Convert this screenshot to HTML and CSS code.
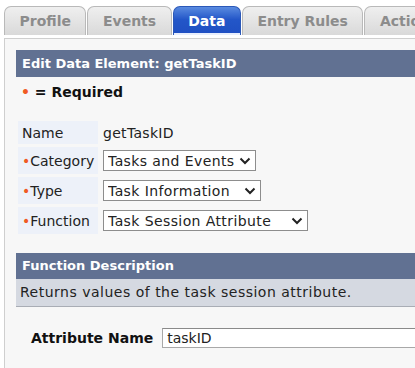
FILE: index.html
```html
<!DOCTYPE html>
<html lang="en">

<head>
    <meta charset="UTF-8">
    <meta name="viewport" content="width=device-width, initial-scale=1.0">
    <title>Edit Data Element</title>
    <link rel="stylesheet" href="styles.css">
</head>

<body>
    <div class="page">
        <ul class="tabs">
            <li class="tab">Profile</li>
            <li class="tab">Events</li>
            <li class="tab active">Data</li>
            <li class="tab">Entry Rules</li>
            <li class="tab">Actions</li>
        </ul>

        <div class="panel">
            <div class="section-head">Edit Data Element: getTaskID</div>
            <div class="required"><span class="dot">&bull;</span> = Required</div>

            <div class="fields">
                <div class="label">Name</div>
                <div class="value">getTaskID</div>

                <div class="label"><span class="dot">&bull;</span>Category</div>
                <div class="value">
                    <span class="select select-category">
                        <select>
                            <option>Tasks and Events</option>
                        </select>
                        <svg class="chevron" width="12" height="8" viewBox="0 0 12 8"><path d="M1.5 1.5 L6 6 L10.5 1.5" fill="none" stroke="#222" stroke-width="2"/></svg>
                    </span>
                </div>

                <div class="label"><span class="dot">&bull;</span>Type</div>
                <div class="value">
                    <span class="select select-type">
                        <select>
                            <option>Task Information</option>
                        </select>
                        <svg class="chevron" width="12" height="8" viewBox="0 0 12 8"><path d="M1.5 1.5 L6 6 L10.5 1.5" fill="none" stroke="#222" stroke-width="2"/></svg>
                    </span>
                </div>

                <div class="label"><span class="dot">&bull;</span>Function</div>
                <div class="value">
                    <span class="select select-function">
                        <select>
                            <option>Task Session Attribute</option>
                        </select>
                        <svg class="chevron" width="12" height="8" viewBox="0 0 12 8"><path d="M1.5 1.5 L6 6 L10.5 1.5" fill="none" stroke="#222" stroke-width="2"/></svg>
                    </span>
                </div>
            </div>

            <div class="section-head section-head-second">Function Description</div>
            <div class="desc">Returns values of the task session attribute.</div>

            <div class="attr">
                <label for="attrName">Attribute Name</label>
                <input id="attrName" type="text" value="taskID">
            </div>
        </div>
    </div>
</body>

</html>
```

FILE: styles.css
```css
html, body {
    margin: 0;
    padding: 0;
    overflow: hidden;
    background: #fff;
}

body {
    font-family: "DejaVu Sans", Verdana, sans-serif;
    font-size: 14px;
    color: #222;
}

.page {
    width: 700px;
    padding: 6px 0 0 4px;
}

.tabs {
    display: flex;
    gap: 1px;
    margin: 0;
    padding: 0;
    list-style: none;
}

.tab {
    height: 28px;
    line-height: 28px;
    padding: 0 14.5px;
    font-weight: bold;
    color: #8c8c8c;
    background: linear-gradient(#efefef, #d9d9d9);
    border: 1px solid #b9b9b9;
    border-bottom: none;
    border-radius: 7px 7px 0 0;
}

.tab.active {
    color: #fff;
    background: linear-gradient(#5a8be0, #2356c8 45%, #1f4fc2);
    border-color: #2b58b8;
    box-shadow: inset 0 -2px 0 #e8eefc;
}

.panel {
    margin-top: 3px;
    padding: 11px 0 30px 11px;
    background: #f7f7f7;
    border-top: 1px solid #cfcfcf;
    border-left: 1px solid #cfcfcf;
}

.section-head {
    height: 27px;
    line-height: 27px;
    padding-left: 6px;
    font-size: 13px;
    font-weight: bold;
    color: #fff;
    background: #617192;
}

.section-head-second {
    height: 26px;
    line-height: 26px;
    margin-top: 19px;
}

.dot {
    color: #f05a24;
}

.required {
    height: 24px;
    line-height: 24px;
    margin-top: 3px;
    padding-left: 5px;
    font-weight: bold;
    color: #111;
}

.fields {
    display: grid;
    grid-template-columns: 80px auto;
    column-gap: 5px;
    row-gap: 3px;
    margin: 17px 0 0 2px;
    justify-content: start;
    letter-spacing: 0.3px;
}

.label {
    display: flex;
    align-items: center;
    min-height: 23px;
    padding-left: 4px;
    letter-spacing: 0;
    background: #edf1f9;
}

.value {
    display: flex;
    align-items: center;
}

.select {
    position: relative;
    display: inline-block;
    padding: 3px 0;
}

.select select {
    display: block;
    appearance: none;
    -webkit-appearance: none;
    height: 21px;
    padding: 0 0 0 4px;
    font-family: "DejaVu Sans", Verdana, sans-serif;
    font-size: 14px;
    letter-spacing: 0.4px;
    color: #222;
    background: #fff;
    border: 1px solid #8d8d8d;
    border-radius: 0;
}

.select-category select {
    width: 153px;
}

.select-type select {
    width: 158px;
}

.select-function select {
    width: 205px;
}

.chevron {
    position: absolute;
    right: 5px;
    top: 10px;
    pointer-events: none;
}

.desc {
    height: 27px;
    line-height: 27px;
    padding-left: 4px;
    letter-spacing: 0.5px;
    background: #d5d9e1;
    border-bottom: 1px solid #a9adb5;
}

.attr {
    display: flex;
    align-items: center;
    gap: 9px;
    margin-top: 21px;
    padding-left: 15px;
}

.attr label {
    font-weight: bold;
    color: #111;
}

.attr input {
    width: 400px;
    height: 20px;
    box-sizing: border-box;
    padding: 0 4px;
    font-family: "DejaVu Sans", Verdana, sans-serif;
    font-size: 14px;
    color: #222;
    background: #fff;
    border: 1px solid #a8a8a8;
    border-top-color: #8a8a8a;
}
```
